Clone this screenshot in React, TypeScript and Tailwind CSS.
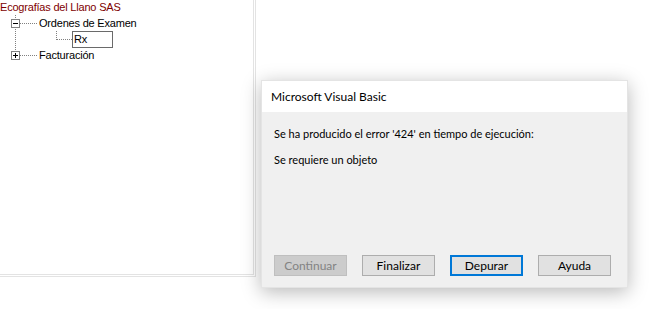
import React from "react";

const TreeBox = ({ sign }: { sign: "+" | "-" }) => (
  <svg width="9" height="9" viewBox="0 0 9 9" className="block">
    <rect x="0.5" y="0.5" width="8" height="8" fill="white" stroke="#808080" />
    <line x1="2" y1="4.5" x2="7" y2="4.5" stroke="black" />
    {sign === "+" && <line x1="4.5" y1="2" x2="4.5" y2="7" stroke="black" />}
  </svg>
);

const DialogButton = ({
  label,
  disabled,
  focused,
}: {
  label: string;
  disabled?: boolean;
  focused?: boolean;
}) => {
  let cls = "bg-[#e1e1e1] border border-[#adadad] text-black";
  if (disabled) cls = "bg-[#cccccc] border border-[#bfbfbf] text-[#838383]";
  if (focused) cls = "bg-[#e1e1e1] border-2 border-[#0078d7] text-black";
  return (
    <div
      className={`w-[73px] h-[21px] flex items-center justify-center text-[12px] ${cls}`}
    >
      {label}
    </div>
  );
};

export default function App() {
  return (
    <div className="relative w-[670px] h-[309px] bg-white overflow-hidden font-['Liberation_Sans',sans-serif]">
      {/* tree panel */}
      <div className="w-[256px] h-[277px] border-r border-b border-[#e3e3e3]">
        <div className="w-[254px] h-[275px] border-r border-b border-[#e3e3e3] relative text-[11px] leading-none tracking-[-0.2px]">
          <div className="pl-0 pt-[2px] text-[#800000] h-[14px]">
            Ecografías del Llano SAS
          </div>
          {/* dotted connectors */}
          <div className="absolute left-[15px] top-[15px] h-[41px] border-l border-dotted border-[#808080]" />
          <div className="absolute left-[20px] top-[23px] w-[17px] border-t border-dotted border-[#808080]" />
          <div className="absolute left-[20px] top-[55px] w-[17px] border-t border-dotted border-[#808080]" />
          <div className="absolute left-[56px] top-[31px] h-[9px] border-l border-dotted border-[#808080]" />
          <div className="absolute left-[56px] top-[39px] w-[16px] border-t border-dotted border-[#808080]" />

          <div className="flex items-center h-[17px] mt-[1px]">
            <div className="ml-[11px] relative z-10">
              <TreeBox sign="-" />
            </div>
            <span className="ml-[19px]">Ordenes de Examen</span>
          </div>
          <div className="flex items-center h-[17px] mt-[-1px]">
            <div className="ml-[72px] w-[41px] h-[17px] border border-[#6a6a6a] flex items-center pl-[1px] bg-white relative z-10">
              Rx
            </div>
          </div>
          <div className="flex items-center h-[17px] mt-[-1px]">
            <div className="ml-[11px] relative z-10">
              <TreeBox sign="+" />
            </div>
            <span className="ml-[19px]">Facturación</span>
          </div>
        </div>
      </div>

      {/* error dialog */}
      <div className="absolute left-[261px] top-[80px] w-[367px] h-[208px] bg-[#f0f0f0] border border-[#e4e4e4] shadow-[0_4px_18px_rgba(0,0,0,0.28)] flex flex-col font-['Lato',sans-serif] text-[12px] text-black">
        <div className="h-[31px] bg-white flex items-center pl-[9px] pt-[1px]">
          Microsoft Visual Basic
        </div>
        <div className="flex flex-col pl-[12px] pt-[14px] gap-[10px] text-[11px]">
          <div className="leading-[16px]">
            Se ha producido el error '424' en tiempo de ejecución:
          </div>
          <div className="leading-[16px]">Se requiere un objeto</div>
        </div>
        <div className="mt-auto mb-[11px] pl-[12px] flex gap-[15px] text-[11px]">
          <DialogButton label="Continuar" disabled />
          <DialogButton label="Finalizar" />
          <DialogButton label="Depurar" focused />
          <DialogButton label="Ayuda" />
        </div>
      </div>
    </div>
  );
}
